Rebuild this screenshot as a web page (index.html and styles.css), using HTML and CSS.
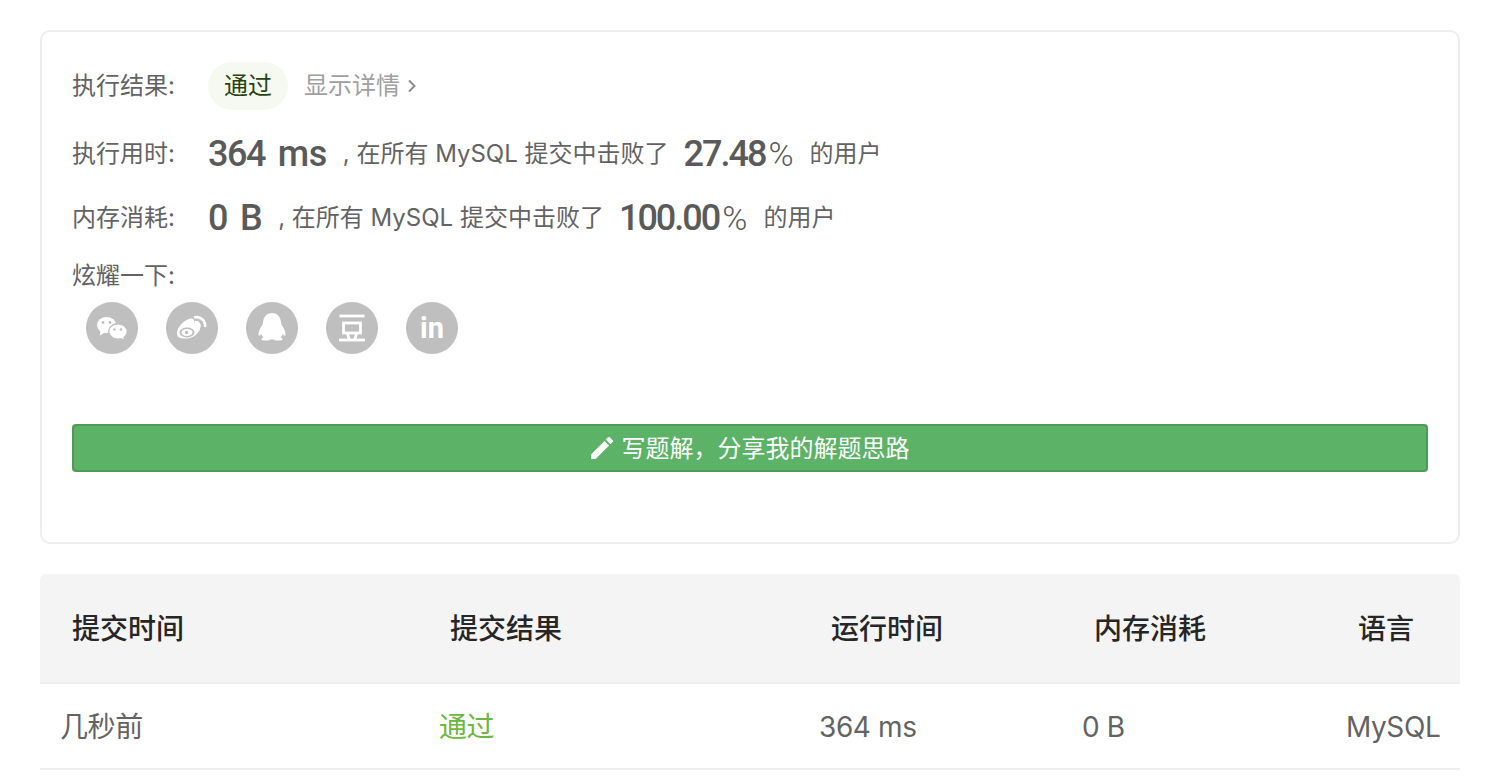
FILE: index.html
```html
<!DOCTYPE html>
<html lang="zh-CN">
<head>
    <meta charset="UTF-8">
    <meta name="viewport" content="width=device-width, initial-scale=1.0">
    <title>提交结果</title>
    <link rel="stylesheet" href="styles.css">
</head>
<body>

<div class="result-card">
    <div class="row row-status">
        <span class="label">执行结果:</span>
        <span class="pill">通过</span>
        <a class="details">显示详情
            <svg class="chevron" viewBox="0 0 10 16" width="10" height="16"><path d="M2 2.5 7.5 8 2 13.5" fill="none" stroke="#8c8c8c" stroke-width="2"/></svg>
        </a>
    </div>
    <div class="row row-time">
        <span class="label">执行用时:</span>
        <strong class="metric">364 <span class="unit">ms</span></strong>
        <span class="note">, 在所有 MySQL 提交中击败了</span>
        <strong class="metric metric-pct">27.48<small>%</small></strong>
        <span class="note">的用户</span>
    </div>
    <div class="row row-memory">
        <span class="label">内存消耗:</span>
        <strong class="metric">0 <span class="unit">B</span></strong>
        <span class="note">, 在所有 MySQL 提交中击败了</span>
        <strong class="metric metric-pct">100.00<small>%</small></strong>
        <span class="note">的用户</span>
    </div>
    <div class="share-label">炫耀一下:</div>
    <div class="share-icons">
        <a class="share-icon">
            <svg viewBox="0 0 52 52" width="52" height="52" fill="#fff">
                <ellipse cx="20.500" cy="23" rx="9.500" ry="8"/>
                <path d="M14.500 28l-.8 5.500 5.500-3z"/>
                <ellipse cx="32" cy="29.500" rx="9.300" ry="7.800" stroke="#bfbfbf" stroke-width="1.400"/>
                <path d="M34 35l3.500 2.600-.3-4.600z"/>
                <circle cx="17" cy="20.500" r="1.400" fill="#bfbfbf"/>
                <circle cx="24" cy="20.500" r="1.400" fill="#bfbfbf"/>
                <circle cx="28.500" cy="27.500" r="1.200" fill="#bfbfbf"/>
                <circle cx="35" cy="27.500" r="1.200" fill="#bfbfbf"/>
            </svg>
        </a>
        <a class="share-icon">
            <svg viewBox="0 0 52 52" width="52" height="52">
                <path d="M11 31c0-6 8-14 14-14.500 3-.2 3.500 2 3 4.500 3.500-1.500 7-.5 6.500 3.500 0 5.500-7 12-14 12S11 35.500 11 31z" fill="#fff"/>
                <ellipse cx="21" cy="30.500" rx="7.500" ry="5" fill="#bfbfbf"/>
                <ellipse cx="21" cy="30.500" rx="5.500" ry="3.400" fill="#fff"/>
                <circle cx="20.500" cy="30.500" r="1.700" fill="#bfbfbf"/>
                <path d="M28 15.500c6-1.500 12 3 11 9.500" fill="none" stroke="#fff" stroke-width="2.600"/>
                <path d="M28.500 20c3-.5 5.500 1.500 5 4.500" fill="none" stroke="#fff" stroke-width="2.200"/>
            </svg>
        </a>
        <a class="share-icon">
            <svg viewBox="0 0 52 52" width="52" height="52">
                <path d="M26 11c5.500 0 8.500 4 9 9 .1 1.500.3 2.500 1 3.500 2 2.800 4 6.500 3.500 9.500-.3 1.500-1.800.5-2.800-1-.5 1.500-1.200 2.700-2.200 3.600 1.300.4 2 1 2 1.800 0 1-2.500 1.100-5 1.100-2 0-3.500-.4-4-1h-3c-.5.6-2 1-4 1-2.500 0-5-.1-5-1.100 0-.8.700-1.400 2-1.800-1-.9-1.700-2.100-2.200-3.600-1 1.500-2.500 2.500-2.800 1-.5-3 1.500-6.700 3.500-9.500.7-1 .9-2 1-3.500.5-5 3.500-9 9-9z" fill="#fff"/>
            </svg>
        </a>
        <a class="share-icon">
            <svg viewBox="0 0 52 52" width="52" height="52" fill="none" stroke="#fff" stroke-width="2.800">
                <path d="M13.500 14h25"/>
                <rect x="17.500" y="21" width="17" height="10"/>
                <path d="M21.500 32l1.600 5M30.500 32l-1.600 5"/>
                <path d="M13 38h26"/>
            </svg>
        </a>
        <a class="share-icon share-text">in</a>
    </div>
    <button class="solution-btn">
        <svg viewBox="3 3 18 18" width="22" height="22" fill="#fff"><path d="M3 17.250V21h3.750L17.810 9.940l-3.750-3.750L3 17.250zM20.710 7.040a1 1 0 0 0 0-1.410l-2.340-2.340a1 1 0 0 0-1.410 0l-1.830 1.830 3.750 3.750 1.830-1.830z"/></svg>
        <span class="solution-text">写题解，分享我的解题思路</span>
    </button>
</div>

<div class="history">
    <div class="history-row history-head">
        <div>提交时间</div>
        <div>提交结果</div>
        <div>运行时间</div>
        <div>内存消耗</div>
        <div>语言</div>
    </div>
    <div class="history-row history-item">
        <div>几秒前</div>
        <div class="passed">通过</div>
        <div>364 ms</div>
        <div>0 B</div>
        <div>MySQL</div>
    </div>
</div>

</body>
</html>
```

FILE: styles.css
```css
* {
    box-sizing: border-box;
    margin: 0;
    padding: 0;
}
body {
    font-family: 'Inter', 'Noto Sans CJK SC', sans-serif;
    font-size: 24px;
    color: #636363;
    background-color: #fff;
    padding: 30px 36px 0 40px;
    overflow: hidden;
}
.result-card {
    height: 514px;
    padding: 30px 30px 0;
    border: 2px solid #eeeeee;
    border-radius: 10px;
}
.row {
    display: flex;
    align-items: center;
    height: 48px;
    line-height: 48px;
}
.row-time {
    margin-top: 20px;
}
.row-memory {
    margin-top: 16px;
}
.label {
    width: 136px;
    flex-shrink: 0;
}
.pill {
    width: 80px;
    height: 48px;
    text-align: center;
    border-radius: 24px;
    background-color: #f6f9f2;
    color: #26440f;
}
.details {
    margin-left: 16px;
    color: #a0a0a0;
    display: flex;
    align-items: center;
}
.chevron {
    margin-left: 7px;
}
.metric {
    font-family: 'Roboto', sans-serif;
    font-size: 36px;
    font-weight: 500;
    color: #5a5a5a;
    letter-spacing: -1.5px;
    word-spacing: 5.5px;
}
.unit {
    letter-spacing: -0.5px;
}
.metric-pct {
    margin-left: 15px;
    letter-spacing: -2px;
}
.metric small {
    font-size: 34px;
    font-weight: 300;
    letter-spacing: 0;
    margin-left: 3px;
}
.note {
    margin-left: 16px;
}
.share-label {
    margin-top: 10px;
    height: 48px;
    line-height: 48px;
}
.share-icons {
    display: flex;
    gap: 28px;
    padding-left: 14px;
    margin-top: 2px;
}
.share-icon {
    width: 52px;
    height: 52px;
    border-radius: 50%;
    background-color: #bfbfbf;
    display: block;
}
.share-text {
    font-family: 'Roboto', sans-serif;
    font-weight: 700;
    font-size: 29px;
    line-height: 52px;
    text-align: center;
    color: #fff;
}
.solution-btn {
    width: 100%;
    height: 48px;
    margin-top: 70px;
    display: flex;
    align-items: center;
    justify-content: center;
    gap: 9px;
    font-family: inherit;
    font-size: 24px;
    color: #fff;
    background-color: #5cb266;
    border: 2px solid #4f9a59;
    border-radius: 4px;
}
.solution-text {
    margin-bottom: 4px;
}
.history {
    margin-top: 30px;
}
.history-row {
    display: grid;
    grid-template-columns: 379px 380px 263px 264px 134px;
}
.history-head {
    height: 110px;
    line-height: 110px;
    font-size: 28px;
    font-weight: 500;
    color: #262626;
    background-color: #f4f4f4;
    border-bottom: 2px solid #eeeeee;
    border-radius: 6px 6px 0 0;
}
.history-head div {
    padding-left: 32px;
}
.history-head div:nth-child(2) {
    padding-left: 31px;
}
.history-item {
    height: 86px;
    line-height: 86px;
    font-size: 28px;
    letter-spacing: -0.4px;
    border-bottom: 2px solid #eeeeee;
}
.history-item div {
    padding-left: 20px;
}
.passed {
    color: #6bb83f;
}
```
